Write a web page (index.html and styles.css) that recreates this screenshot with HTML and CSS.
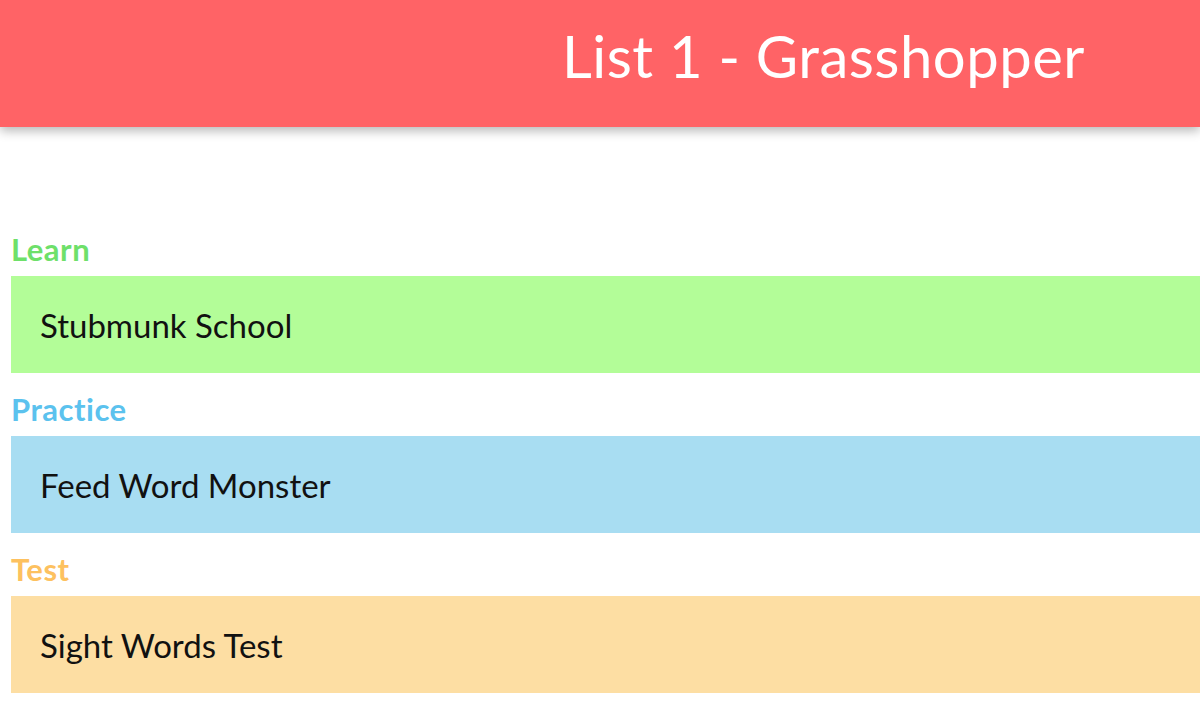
FILE: index.html
```html
<!DOCTYPE html>
<html lang="en">
<head>
<meta charset="utf-8">
<title>List 1 - Grasshopper</title>
<link rel="stylesheet" href="styles.css">
</head>
<body>
<header class="topbar">
  <h1 class="title">List 1 - Grasshopper</h1>
</header>
<main class="content">
  <section class="group">
    <h2 class="label label-learn">Learn</h2>
    <div class="item item-learn">Stubmunk School</div>
  </section>
  <section class="group">
    <h2 class="label label-practice">Practice</h2>
    <div class="item item-practice">Feed Word Monster</div>
  </section>
  <section class="group">
    <h2 class="label label-test">Test</h2>
    <div class="item item-test">Sight Words Test</div>
  </section>
</main>
</body>
</html>
```

FILE: styles.css
```css
html, body {
  margin: 0;
  padding: 0;
  background: #ffffff;
  overflow: hidden;
}
body {
  font-family: "Lato", "Open Sans", "Liberation Sans", sans-serif;
  width: 1200px;
  height: 709px;
}
.topbar {
  height: 127px;
  box-sizing: border-box;
  background: #ff6366;
  box-shadow: 0 4px 10px rgba(0, 0, 0, 0.28);
  display: flex;
  align-items: center;
  padding-left: 562px;
  padding-bottom: 16px;
  position: relative;
  z-index: 1;
}
.title {
  margin: 0;
  color: #ffffff;
  font-weight: 400;
  font-size: 58px;
  line-height: 1;
  letter-spacing: 0.5px;
}
.content {
  padding-top: 86px;
  padding-left: 11px;
}
.group {
  display: flex;
  flex-direction: column;
}
.label {
  margin: 0;
  height: 63px;
  box-sizing: border-box;
  display: flex;
  align-items: flex-end;
  padding-bottom: 11px;
  font-size: 31px;
  font-weight: 700;
  line-height: 1;
  letter-spacing: 0.5px;
}
.label-learn { color: #6ee06a; }
.label-practice { color: #5bc2ee; }
.label-test { color: #fdc15f; }
.item {
  height: 97px;
  display: flex;
  align-items: center;
  padding-left: 29px;
  font-size: 33px;
  color: #111111;
}
.item-learn { background: #b3fd98; }
.item-practice { background: #a8ddf2; }
.item-test { background: #fddea3; }
```
